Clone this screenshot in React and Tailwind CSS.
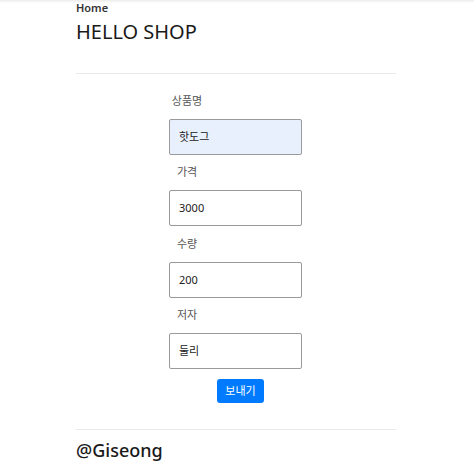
export default function App() {
  const fields = [
    { label: "상품명", value: "핫도그", filled: true },
    { label: "가격", value: "3000" },
    { label: "수량", value: "200" },
    { label: "저자", value: "둘리" },
  ];
  return (
    <div
      className="relative w-[474px] h-[465px] bg-white overflow-hidden text-[#212529]"
      style={{ fontFamily: '"Noto Sans", "Noto Sans CJK KR", sans-serif' }}
    >
      <div className="absolute top-0 left-0 right-0 h-[3px] bg-gradient-to-b from-[#ebebeb] to-white" />
      <div className="ml-[76px] w-[320px]">
        <div className="pt-[1px] h-[16px] text-[11px] leading-[14px] font-semibold text-[#333]">Home</div>
        <h1 className="mt-[3px] text-[20px] leading-[26px] font-normal text-[#1a1a1a]">HELLO SHOP</h1>
        <div className="mt-[28px] h-px bg-[#eaeaea]" />
        <div className="ml-[93px] w-[133px] pt-[19px]">
          {fields.map((f, i) => (
            <div key={i} className={i === 0 ? "" : i === 2 ? "mt-[10px]" : "mt-[9px]"}>
              <div className="ml-[3px] w-[30px] h-[16px] text-center text-[11px] leading-[16px] text-[#555] whitespace-nowrap flex justify-center">
                {f.label}
              </div>
              <div
                className={
                  "mt-[10px] h-[36px] border border-[#9a9a9a] rounded-[2px] pl-[9px] flex items-center text-[11px] text-[#222] " +
                  (f.filled ? "bg-[#e8f0fe]" : "bg-white")
                }
              >
                {f.value}
              </div>
            </div>
          ))}
          <div className="mt-[10px] ml-[48px] w-[47px] h-[24px] rounded-[3px] bg-[#007bff] text-white text-[11px] flex items-center justify-center">
            보내기
          </div>
        </div>
        <div className="mt-[26px] h-px bg-[#eaeaea]" />
        <div className="mt-[8px] text-[18px] leading-[24px] font-medium text-[#1a1a1a]">@Giseong</div>
      </div>
    </div>
  );
}
